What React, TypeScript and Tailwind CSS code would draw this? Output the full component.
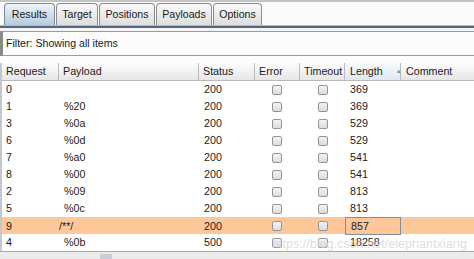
import React from "react";

const rows: [string, string, string, string, boolean?][] = [
  ["0", "", "200", "369"],
  ["1", "%20", "200", "369"],
  ["3", "%0a", "200", "529"],
  ["6", "%0d", "200", "529"],
  ["7", "%a0", "200", "541"],
  ["8", "%00", "200", "541"],
  ["2", "%09", "200", "813"],
  ["5", "%0c", "200", "813"],
  ["9", "/**/", "200", "857", true],
  ["4", "%0b", "500", "18258"],
];

const cols = "grid grid-cols-[57px_140px_56px_45px_45px_56px_75px]";

function Check({ light }: { light?: boolean }) {
  return (
    <div
      className={
        "w-[10px] h-[10px] rounded-[2px] border border-[#8f959c] " +
        (light
          ? "bg-gradient-to-b from-[#f2f2f2] to-[#d9dbde]"
          : "bg-gradient-to-b from-[#f4f4f4] to-[#dcdcdc]")
      }
    />
  );
}

function Tab({ label, active }: { label: string; active?: boolean }) {
  return (
    <div
      className={
        "h-[22px] flex items-center justify-center rounded-t-[4px] border border-b-0 text-[10.6px] text-[#1a1a1a] " +
        (active
          ? "border-[#7b8a9c] bg-gradient-to-b from-[#eef3f8] to-[#b8cadc]"
          : "border-[#8d8d8d] bg-gradient-to-b from-[#f9f9f9] to-[#dedede] h-[21px]")
      }
    >
      {label}
    </div>
  );
}

export default function App() {
  return (
    <div
      className="relative w-[474px] h-[259px] overflow-hidden bg-[#fafafa] border-t-2 border-[#c4c4c4] text-[#1b1b1b]"
      style={{ fontFamily: '"Liberation Sans", Arial, sans-serif' }}
    >
      {/* tabs */}
      <div className="flex items-end h-[22px] pl-[4px] gap-[1px] mt-[1px]">
        <div className="w-[51px]"><Tab label="Results" active /></div>
        <div className="w-[42px]"><Tab label="Target" /></div>
        <div className="w-[56px]"><Tab label="Positions" /></div>
        <div className="w-[56px]"><Tab label="Payloads" /></div>
        <div className="w-[49px]"><Tab label="Options" /></div>
      </div>
      <div className="h-[1px] bg-[#a9bdd2]" />
      <div className="h-[2px] bg-[#54667c]" />
      <div className="h-[3px] bg-[#f4f4f4]" />

      {/* filter */}
      <div className="h-[25px] flex items-center bg-[#fcfcfc] border-y border-[#9c9c9c] border-l-[3px] border-l-[#8a8a8a] pl-[3px] text-[10.6px]">
        Filter: Showing all items
      </div>

      <div className="h-[7px] bg-[#fdfdfd]" />

      {/* table */}
      <div className="border-l-2 border-[#c4c7cc] bg-white">
        <div className={cols + " h-[18px] text-[10.7px] border-b border-[#b9b9b9]"}>
          {["Request", "Payload", "Status", "Error", "Timeout"].map((h) => (
            <div
              key={h}
              className="flex items-center pl-[4px] border-r border-[#bcbcbc] bg-gradient-to-b from-[#fdfdfd] to-[#e6e6e6]"
            >
              {h}
            </div>
          ))}
          <div className="flex items-center pl-[5px] border-r border-[#bcbcbc] bg-gradient-to-b from-[#f7fafd] to-[#dfe7f0]">
            Length
            <span className="ml-[13px] text-[6px] text-[#7f93aa]">▲</span>
          </div>
          <div className="flex items-center pl-[5px] bg-gradient-to-b from-[#fdfdfd] to-[#e6e6e6]">
            Comment
          </div>
        </div>
        {rows.map(([req, pay, st, len, sel]) => (
          <div
            key={req}
            className={cols + " h-[17px] text-[10.7px] " + (sel ? "bg-[#fdc79a]" : "bg-white")}
          >
            <div className="flex items-center pl-[4px]">{req}</div>
            <div className={"flex items-center " + (sel ? "pl-[0px]" : "pl-[5px]")}>{pay}</div>
            <div className="flex items-center pl-[5px]">{st}</div>
            <div className="flex items-center justify-center pr-[1px]"><Check /></div>
            <div className="flex items-center justify-center"><Check light /></div>
            <div
              className={
                "flex items-center pl-[5px] " +
                (sel ? "border border-[#7d8fa5] pl-[4px]" : "")
              }
            >
              {len}
            </div>
            <div />
          </div>
        ))}
      </div>

      {/* bottom scrollbar strip */}
      <div className="h-[1px] bg-[#a8a8a8]" />
      <div className="relative h-[10px] bg-[#ebebeb]">
        <div className="absolute left-[100px] top-[2px] w-[12px] h-[6px] bg-[#c9ced5]" />
      </div>

      {/* watermark */}
      <div className="absolute left-[272px] top-[235px] text-[12.6px] leading-[14px] text-[rgba(215,215,215,0.85)] whitespace-nowrap pointer-events-none">
        https://blog.csdn.net/elephantxiang
      </div>
    </div>
  );
}
